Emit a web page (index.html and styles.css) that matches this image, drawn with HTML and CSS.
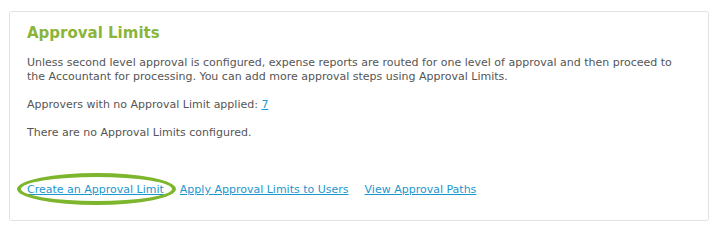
FILE: index.html
```html
<!DOCTYPE html>
<html lang="en">
<head>
    <meta charset="UTF-8">
    <title>Approval Limits</title>
    <link rel="stylesheet" href="styles.css">
</head>
<body>
    <div class="panel">
        <div class="panel-title">Approval Limits</div>
        <p class="intro">Unless second level approval is configured, expense reports are routed for one level of approval and then proceed to the Accountant for processing. You can add more approval steps using Approval Limits.</p>
        <p>Approvers with no Approval Limit applied: <a href="#">7</a></p>
        <p>There are no Approval Limits configured.</p>
        <div class="actions">
            <a href="#" class="highlight">Create an Approval Limit</a>
            <a href="#">Apply Approval Limits to Users</a>
            <a href="#">View Approval Paths</a>
        </div>
    </div>
</body>
</html>
```
FILE: styles.css
```css
body {
    margin: 0;
    font-family: "DejaVu Sans", Verdana, sans-serif;
    font-size: 11px;
    color: #555555;
    background: white;
}

.panel {
    margin: 11px 9px 8px 9px;
    height: 210px;
    box-sizing: border-box;
    border: 1px solid #e2e2e2;
    border-radius: 3px;
    padding: 12px 17px 0 17px;
}

.panel-title {
    color: #8ab53a;
    font-size: 15px;
    font-weight: bold;
    margin-bottom: 14px;
}

.panel p {
    margin: 0 0 14px 0;
    line-height: 14px;
}

.intro {
    padding-right: 10px;
}

a {
    color: #1b97cf;
}

.actions {
    display: flex;
    gap: 16px;
    margin-top: 43px;
}

.highlight {
    position: relative;
}

.highlight::after {
    content: "";
    position: absolute;
    left: -10px;
    right: -12px;
    top: -10px;
    bottom: -9px;
    border: 4px solid #7db52c;
    border-radius: 50%;
}
```
